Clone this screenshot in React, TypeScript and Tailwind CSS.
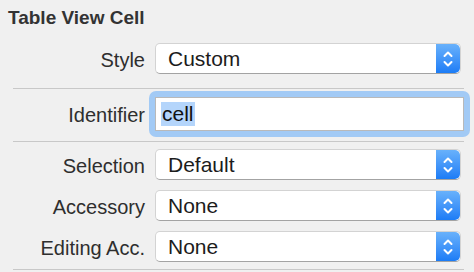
import type { ReactNode } from "react";

const font = { fontFamily: '"Liberation Sans", Arial, sans-serif' };

function Stepper() {
  return (
    <div className="w-[24px] h-full rounded-r-[5px] bg-gradient-to-b from-[#68b1fb] to-[#1b7cf6] flex items-center justify-center">
      <svg width="10" height="18" viewBox="0 0 10 18" fill="none">
        <path d="M1.5 6 L5 2.5 L8.5 6" stroke="white" strokeWidth="2" strokeLinecap="round" strokeLinejoin="round" />
        <path d="M1.5 12 L5 15.5 L8.5 12" stroke="white" strokeWidth="2" strokeLinecap="round" strokeLinejoin="round" />
      </svg>
    </div>
  );
}

function Popup({ value }: { value: string }) {
  return (
    <div className="ml-[10px] w-[306px] h-[31px] flex bg-white rounded-[5px] border border-[#d3d3d3] border-b-[#a3a3a3] overflow-hidden">
      <div className="flex-1 flex items-center pl-[12px] pt-px text-[21px] text-[#1c1c1c]">{value}</div>
      <Stepper />
    </div>
  );
}

function Row({ label, children, className = "" }: { label: string; children: ReactNode; className?: string }) {
  return (
    <div className={`flex items-center ${className}`}>
      <div className="w-[145px] pt-[2px] text-right text-[20px] text-[#2e2e2e] leading-none">{label}</div>
      {children}
    </div>
  );
}

function Separator({ className = "" }: { className?: string }) {
  return <div className={`ml-[13px] w-[451px] h-px bg-[#c8c8c8] ${className}`} />;
}

export default function App() {
  return (
    <div className="w-[474px] h-[272px] bg-[#f0f0f0] overflow-hidden" style={font}>
      <div className="h-[37px] pl-[8px] pt-[7px] text-[19px] font-bold text-[#333] leading-[22px]">
        Table View Cell
      </div>
      <Row label="Style" className="mt-[6px]">
        <Popup value="Custom" />
      </Row>
      <Separator className="mt-[14px]" />
      <Row label="Identifier" className="mt-[2px]">
        <div className="ml-[4px] w-[321px] h-[46px] p-[6px] rounded-[7px] bg-[#a2caf5]">
          <div className="h-full bg-white border border-[#b9b9b9] flex items-center pl-[5px]">
            <span className="text-[21px] text-[#111] bg-[#b4d5fb] px-px leading-[24px]">cell</span>
          </div>
        </div>
      </Row>
      <Separator className="mt-[4px]" />
      <Row label="Selection" className="mt-[7px]">
        <Popup value="Default" />
      </Row>
      <Row label="Accessory" className="mt-[10px]">
        <Popup value="None" />
      </Row>
      <Row label="Editing Acc." className="mt-[10px]">
        <Popup value="None" />
      </Row>
      <Separator className="mt-[7px]" />
    </div>
  );
}
